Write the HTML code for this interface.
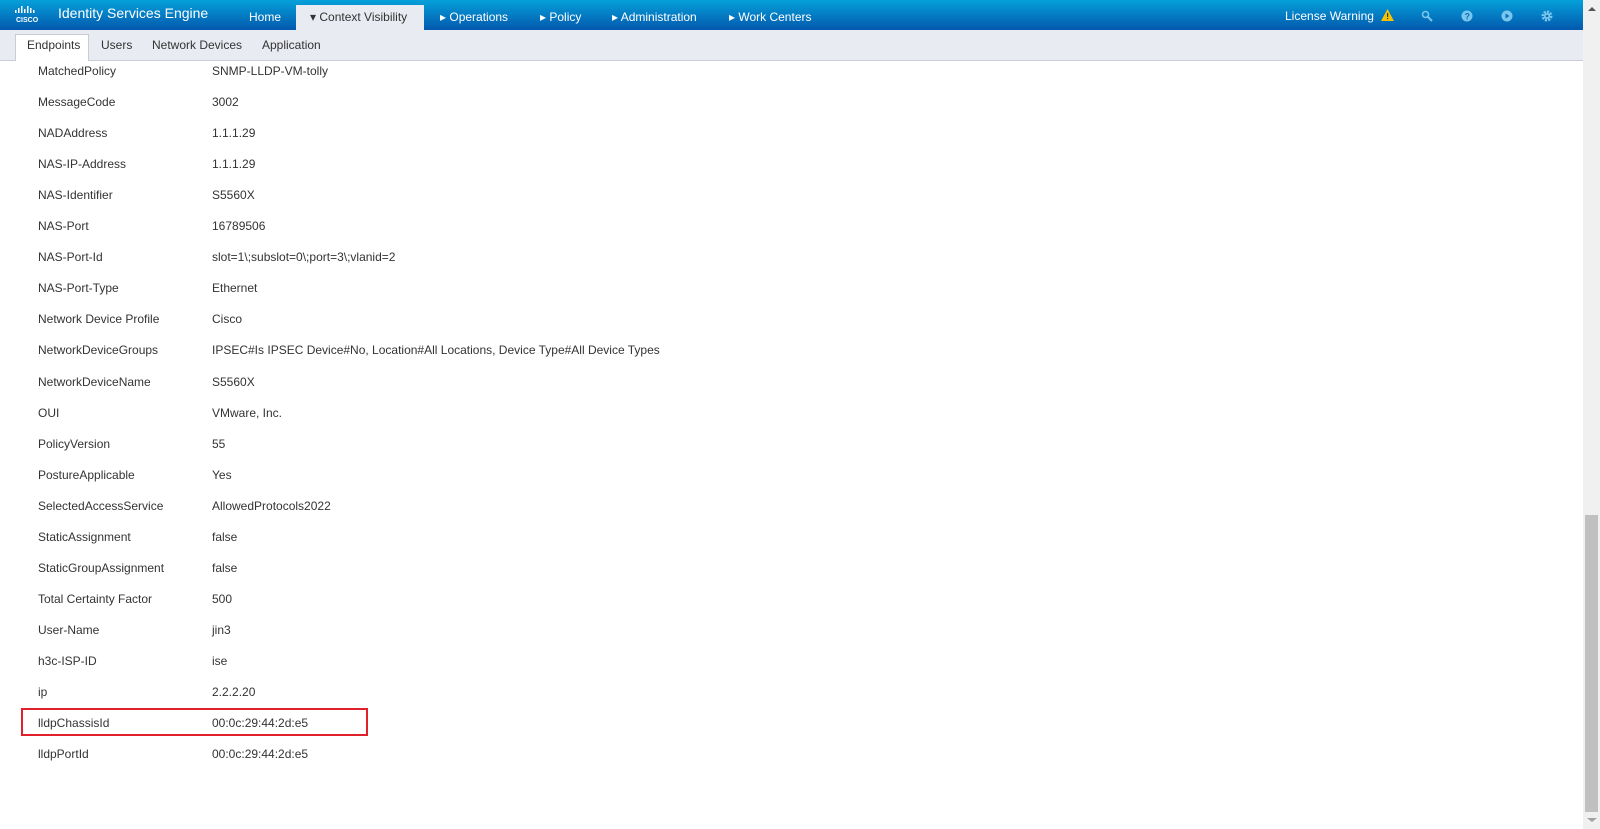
<!DOCTYPE html>
<html><head><meta charset="utf-8"><style>
*{margin:0;padding:0;box-sizing:border-box}
body{width:1600px;height:829px;overflow:hidden;background:#fff;font-family:"Liberation Sans",Arial,sans-serif;position:relative}
#hdr{position:absolute;left:0;top:0;width:1583px;height:30px;background:linear-gradient(#04a0da,#0358ad)}
.t{position:absolute;color:#fff;font-size:12px;top:10px;white-space:nowrap}
#sub{position:absolute;left:0;top:30px;width:1583px;height:31px;background:#e8ebf2;border-bottom:1px solid #c8ccd4}
.s{position:absolute;top:8px;font-size:12px;color:#333}
.r{position:absolute;font-size:12px;color:#333;white-space:nowrap}
#sb{position:absolute;left:1583px;top:0;width:17px;height:829px;background:#f0f0f0}
</style></head><body>
<div id="hdr">
<svg style="position:absolute;left:14px;top:6px" width="30" height="18"><g fill="#fff"><rect x="1" y="4" width="1.5" height="3"/><rect x="4" y="2" width="1.5" height="5"/><rect x="7" y="0" width="1.5" height="7"/><rect x="10" y="3" width="1.5" height="4"/><rect x="13" y="0" width="1.5" height="7"/><rect x="16" y="2" width="1.5" height="5"/><rect x="19" y="4" width="1.5" height="3"/></g><text x="2" y="16" font-size="7" font-weight="bold" fill="#fff" font-family="Liberation Sans">CISCO</text></svg>
<div class="t" style="left:58px;top:5px;font-size:14px">Identity Services Engine</div>
<div class="t" style="left:249px">Home</div>
<div style="position:absolute;left:296px;top:5px;width:128px;height:25px;background:#e8ebf2"></div>
<div class="t" style="left:310px;color:#333">▾ Context Visibility</div>
<div class="t" style="left:440px">▸ Operations</div>
<div class="t" style="left:540px">▸ Policy</div>
<div class="t" style="left:612px">▸ Administration</div>
<div class="t" style="left:729px">▸ Work Centers</div>
<div class="t" style="left:1285px;top:9px">License Warning</div>
<svg style="position:absolute;left:1381px;top:9px" width="13" height="12"><path d="M6.5 0L13 12H0Z" fill="#f5c400"/><rect x="6" y="4" width="1.2" height="4" fill="#333"/><rect x="6" y="9" width="1.2" height="1.2" fill="#333"/></svg>
<svg style="position:absolute;left:1421px;top:10px" width="12" height="12"><circle cx="4.5" cy="4.5" r="3" fill="none" stroke="#7ac7ee" stroke-width="1.6"/><path d="M7 7l4 4" stroke="#7ac7ee" stroke-width="2"/></svg>
<svg style="position:absolute;left:1461px;top:10px" width="12" height="12"><circle cx="6" cy="6" r="5.5" fill="#7ac7ee"/><text x="3.5" y="9.5" font-size="9" font-weight="bold" fill="#0a6fc0" font-family="Liberation Sans">?</text></svg>
<svg style="position:absolute;left:1501px;top:10px" width="12" height="12"><circle cx="6" cy="6" r="5.5" fill="#7ac7ee"/><path d="M4.5 3.5L8.5 6L4.5 8.5Z" fill="#0a6fc0"/></svg>
<svg style="position:absolute;left:1541px;top:10px" width="12" height="12"><circle cx="6" cy="6" r="4" fill="none" stroke="#7ac7ee" stroke-width="3" stroke-dasharray="2 1.1"/><circle cx="6" cy="6" r="3" fill="#7ac7ee"/><circle cx="6" cy="6" r="1.3" fill="#0a6fc0"/></svg>
</div>
<div id="sub">
<div style="position:absolute;left:15px;top:4px;width:74px;height:27px;background:#fff;border:1px solid #c8ccd4;border-bottom:none"></div>
<div class="s" style="left:27px">Endpoints</div>
<div class="s" style="left:101px">Users</div>
<div class="s" style="left:152px">Network Devices</div>
<div class="s" style="left:262px">Application</div>
</div>
<div id="rows"></div>
<div style="position:absolute;left:21px;top:708px;width:347px;height:28px;border:2px solid #e0202a"></div>
<div id="sb"><div style="position:absolute;left:5px;top:7px;border:4px solid transparent;border-bottom:4px solid #555;border-top:none"></div>
<div style="position:absolute;left:2px;top:515px;width:13px;height:297px;background:#c0c0c0"></div>
<div style="position:absolute;left:4px;top:818px;border:5px solid transparent;border-top:4px solid #a0a0a0;border-bottom:none"></div></div>
<script>
var d=[["MatchedPolicy","SNMP-LLDP-VM-tolly"],["MessageCode","3002"],["NADAddress","1.1.1.29"],["NAS-IP-Address","1.1.1.29"],["NAS-Identifier","S5560X"],["NAS-Port","16789506"],["NAS-Port-Id","slot=1\\;subslot=0\\;port=3\\;vlanid=2"],["NAS-Port-Type","Ethernet"],["Network Device Profile","Cisco"],["NetworkDeviceGroups","IPSEC#Is IPSEC Device#No, Location#All Locations, Device Type#All Device Types"],["NetworkDeviceName","S5560X"],["OUI","VMware, Inc."],["PolicyVersion","55"],["PostureApplicable","Yes"],["SelectedAccessService","AllowedProtocols2022"],["StaticAssignment","false"],["StaticGroupAssignment","false"],["Total Certainty Factor","500"],["User-Name","jin3"],["h3c-ISP-ID","ise"],["ip","2.2.2.20"],["lldpChassisId","00:0c:29:44:2d:e5"],["lldpPortId","00:0c:29:44:2d:e5"]];
var h="";d.forEach(function(r,i){var y=64+i*31.05;h+='<div class="r" style="left:38px;top:'+y+'px">'+r[0]+'</div><div class="r" style="left:212px;top:'+y+'px">'+r[1]+'</div>';});
document.getElementById("rows").innerHTML=h;
</script>
</body></html>
